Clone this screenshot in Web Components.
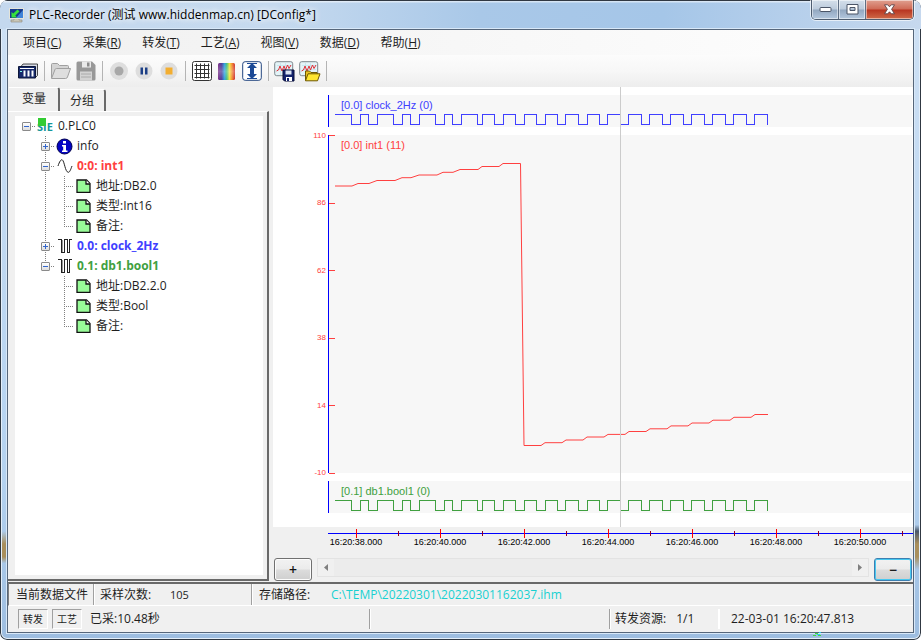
<!DOCTYPE html>
<html lang="zh-CN">
<head>
<meta charset="utf-8">
<title>PLC-Recorder</title>
<style>
  html, body { margin: 0; height: 100%; }
  body { font: 12px/16px "Open Sans", "Noto Sans CJK SC", sans-serif; color: #1e1e1e; background: #fff; overflow: hidden; }
</style>
</head>
<body>
<app-window>
  <title-bar slot="title">PLC-Recorder (测试 www.hiddenmap.cn) [DConfig*]</title-bar>
  <menu-bar></menu-bar>
  <tool-bar></tool-bar>
  <work-area>
    <side-panel slot="side"><variable-tree></variable-tree></side-panel>
    <trend-chart></trend-chart>
    <scroll-row></scroll-row>
  </work-area>
  <file-status></file-status>
  <run-status></run-status>
</app-window>

<script>
const define = (name, html, init) => customElements.define(name, class extends HTMLElement {
  connectedCallback() {
    if (this.shadowRoot) return;
    const root = this.attachShadow({ mode: 'open' });
    root.innerHTML = typeof html === 'function' ? html(this) : html;
    if (init) init(root, this);
  }
});

/* ---------- window frame ---------- */
define('app-window', `
<style>
  :host { display: flex; flex-direction: column; height: 100vh; box-sizing: border-box; padding: 0 7px 7px;
    border-radius: 8px 8px 7px 7px; position: relative; overflow: hidden;
    box-shadow: inset 0 0 0 1px #303842, inset 0 0 0 2px #e4effa;
    background:
      linear-gradient(#0000 82%, #49576a 83%, #a98f5c 85%, #a98f5c 87%, #0000 89%) right / 7px 100% no-repeat,
      linear-gradient(#0000 83%, #a98f5c 85%, #a98f5c 87%, #0000 88%) left / 7px 100% no-repeat,
      linear-gradient(#cfe1f4 0, #c3daf2 30%, #b4d2f0 75%, #9dbde0 100%); }
  .client { flex: 1; min-height: 0; display: flex; flex-direction: column; background: #f0f0f0;
    border: 1px solid #56667a; box-shadow: 0 0 0 1px #d8e8f8; }
  .mark { position: absolute; right: 99px; bottom: 3px; }
</style>
<slot name="title"></slot>
<div class="client"><slot></slot></div>
<svg class="mark" width="9" height="5" viewBox="0 0 9 5" shape-rendering="crispEdges"><path d="M0 3.5h3M2 1.5h3M5 3.5h3" stroke="#3ddc3d"/><path d="M4 2.5h3M6 .5h2" stroke="#22c8e8"/></svg>`);

define('title-bar', `
<style>
  :host { display: flex; align-items: center; height: 29px; flex: none; margin: 0 -7px; padding: 0 7px 0 9px; box-sizing: border-box; color: #000;
    background: linear-gradient(#303842 1px, #fff8 1px, #fff8 2px, #0000 3px),
      linear-gradient(90deg, #c4d8ee 0, #c6daef 30%, #a9c8e8 52%, #a5c6e8 72%, #c6d8ee 100%); border-radius: 8px 8px 0 0; }
  .name { flex: 1; margin-left: 5px; text-shadow: 0 0 6px #fff, 0 0 6px #fff; }
  .controls { display: flex; align-self: flex-start; border: 1px solid #4e5d70; border-top: 0; border-radius: 0 0 5px 5px; overflow: hidden; box-shadow: 0 0 0 1px #ffffffa0; }
  button { width: 27px; height: 19px; padding: 0; border: 0; border-right: 1px solid #5f6f84; display: grid; place-items: center;
    background: linear-gradient(#d4dfea, #bccbdc 48%, #92a7c0 52%, #b4c8de); box-shadow: inset 0 0 0 1px #ffffff80; }
  button.close { width: 47px; border-right: 0; background: linear-gradient(#e0a090, #cf6a56 48%, #b83420 52%, #cf6a48); }
</style>
<svg width="15" height="16" viewBox="0 0 15 16"><path d="M5 11h5v2h3v2H2v-2h3z" fill="#c9c7b8" stroke="#8a8878" stroke-width=".6"/><rect x=".5" y="1.5" width="14" height="10" fill="#173a8c" stroke="#e4e4da"/><path d="M7 11l7-8v8z" fill="#3f83d9"/><path d="M2.500 10.500V5l1.800 1.500L8.500 2.500l2 2-4.200 4L8 10.500z" fill="#35e03c"/></svg>
<span class="name"><slot></slot></span>
<div class="controls">
  <button aria-label="最小化"><svg width="13" height="7"><rect x="1" y="1.500" width="11" height="4" rx="1" fill="#fff" stroke="#4b5567"/></svg></button>
  <button aria-label="还原"><svg width="13" height="11"><path fill-rule="evenodd" d="M1 .5h11v9.500H1zM4 3.500h5v3H4z" fill="#fff" stroke="#4b5567"/></svg></button>
  <button class="close" aria-label="关闭"><svg width="13" height="11"><path d="M1.500.8h3.200l1.800 2 1.800-2h3.200L8.600 5.300l2.900 4.500H8.300l-1.800-2-1.800 2H1.500l2.900-4.500z" fill="#fff" stroke="#5b4044" stroke-width=".9"/></svg></button>
</div>`);

/* ---------- menu ---------- */
define('menu-bar', () => `
<style>
  :host { display: block; flex: none; background: linear-gradient(90deg, #f0f0f0, #fcfcfc 85%); }
  nav { display: flex; height: 25px; padding-left: 5px; }
  button { font: inherit; color: inherit; border: 0; background: none; padding: 1px 11px 0 10px; white-space: nowrap; }
</style>
<nav>${[['项目','C'],['采集','R'],['转发','T'],['工艺','A'],['视图','V'],['数据','D'],['帮助','H']]
  .map(([t, k]) => `<button>${t}(<u>${k}</u>)</button>`).join('')}</nav>`);

/* ---------- toolbar ---------- */
const trendBase = `<rect x=".7" y=".7" width="18" height="14" rx="2" fill="#e4f4f8" stroke="#7d878c"/><path d="M3 4.500h14M3 8.500h14M6.500 2v12M11.500 2v12" stroke="#b8dde8" stroke-width=".6"/><path d="M2.500 10l2-1 1.500-4 2 5 2-5 1.500 4 2-5 1.500 3.500 2-3.500" fill="none" stroke="#e03038"/>`;
const tools = [
  ['PLC', 20, 16, `<path d="M3 3.500L5 1h14.500v11.500L17 15z" fill="#d9dde6" stroke="#222" stroke-width=".8"/><path d="M.5 3.500h17v11.500H.5z" fill="#172a6c" stroke="#0c1638"/><path d="M2 5h14v1H2z" fill="#fff"/><path d="M2 8.500h2" stroke="#8fe"/><path d="M5.500 7.500h2v6h-2zM9.500 7.500h2v6h-2zM13.500 7.500h2v6h-2z" fill="#fff"/>`],
  '|',
  ['打开', 22, 20, `<path d="M1.500 17V3.500q0-1 1-1h5l2 2h8q1 0 1 1V8" fill="#d4d4d4" stroke="#a0a0a0"/><path d="M1.500 17.500L5 8.500q.4-1 1.500-1h14L17.500 16q-.5 1.500-2 1.500z" fill="#dedede" stroke="#a0a0a0"/>`],
  ['保存', 20, 20, `<path d="M.5 2q0-1.500 1.500-1.500h14l3.500 3.500V18q0 1.500-1.500 1.500H2Q.5 19.500.5 18z" fill="#989898"/><path d="M6 .5h9v6H6z" fill="#e9e9e9"/><path d="M11 1.500h2.500v4H11z" fill="#8a8a8a"/><path d="M4 10.500h12v9H4z" fill="#d3d3d3"/><path d="M5 13h10M5 16h10" stroke="#aaa"/>`],
  '|',
  ['录制', 18, 18, `<circle cx="9" cy="9" r="9" fill="#dedede"/><circle cx="9" cy="9" r="4.500" fill="#a8a8a8"/>`],
  ['暂停', 18, 18, `<circle cx="9" cy="9" r="8.500" fill="#dedede"/><path d="M5.500 5.500h2.500v7H5.500zM10 5.500h2.500v7H10z" fill="#1c3f86"/>`],
  ['停止', 18, 18, `<circle cx="9" cy="9" r="8.500" fill="#dedede"/><path d="M5.500 5.500h7v7h-7z" fill="#f3ae30"/>`],
  '|',
  ['网格', 20, 20, `<rect x=".5" y=".5" width="19" height="19" rx="2" fill="#fff" stroke="#333"/><path d="M2.500 4.500h15M2.500 8.500h15M2.500 12.500h15M2.500 16.500h15M4.500 2.500v15M8.500 2.500v15M12.500 2.500v15M16.500 2.500v15" stroke="#333"/>`],
  ['颜色', 17, 17, `<defs><linearGradient id="c"><stop offset="0" stop-color="#7a2a84"/><stop offset=".22" stop-color="#4a3f9c"/><stop offset=".38" stop-color="#2f9fe0"/><stop offset=".52" stop-color="#49c07a"/><stop offset=".68" stop-color="#f4e23a"/><stop offset=".85" stop-color="#ef7a30"/><stop offset="1" stop-color="#c8262c"/></linearGradient><linearGradient id="w" x2="0" y2="1"><stop offset="0" stop-color="#fff" stop-opacity="0"/><stop offset=".5" stop-color="#fff" stop-opacity=".25"/><stop offset="1" stop-color="#fff" stop-opacity="0"/></linearGradient></defs><rect width="17" height="17" rx="1.500" fill="url(#c)"/><rect width="17" height="17" rx="1.500" fill="url(#w)"/>`],
  ['自适应高度', 20, 20, `<rect x=".7" y=".7" width="18.600" height="18.600" rx="2.500" fill="#fff" stroke="#22457f"/><path d="M10 2l5 5h-3v6h3l-5 5-5-5h3V7H5z" fill="#1d4a96"/><path d="M5 2.500h10M5 17.500h10" stroke="#1d4a96"/>`],
  '|',
  ['保存趋势', 21, 21, trendBase + `<path d="M9 9h11v11H10.500L9 18.500z" fill="#12226c" stroke="#080f38"/><path d="M11.500 9.500h6v4h-6z" fill="#dbe4f2"/><path d="M12 16h6v4h-6z" fill="#fff"/><path d="M13 17h2v3h-2z" fill="#12226c"/>`],
  ['打开趋势', 22, 21, trendBase + `<path d="M6.500 19.500V10h4l1.500 1.500h6V13" fill="#e8c020" stroke="#6e5800"/><path d="M6.500 19.800l2.500-7h12l-2.500 7z" fill="#ffe62e" stroke="#6e5800"/>`],
  '|'
];
define('tool-bar', () => `
<style>
  :host { display: flex; align-items: center; height: 32px; flex: none; padding-left: 7px; background: linear-gradient(#fcfcfc, #f7f7f7 50%, #ededed); }
  button { width: 25px; height: 26px; border: 0; padding: 0; background: none; display: grid; place-items: center; }
  i { width: 8px; height: 20px; background: linear-gradient(#b4b4b4, #b4b4b4) center / 1px 100% no-repeat; }
</style>
${tools.map(t => t === '|' ? '<i></i>' : `<button aria-label="${t[0]}"><svg width="${t[1]}" height="${t[2]}" viewBox="0 0 ${t[1]} ${t[2]}">${t[3]}</svg></button>`).join('')}`);

/* ---------- work area ---------- */
define('work-area', `
<style>
  :host { flex: 1; min-height: 0; display: grid; grid-template-columns: 265px minmax(0, 1fr); }
  .main { display: flex; flex-direction: column; min-height: 0; }
</style>
<slot name="side"></slot>
<div class="main"><slot></slot></div>`);

define('side-panel', `
<style>
  :host { display: flex; flex-direction: column; min-height: 0; padding: 0 4px 1px 0; }
  .tabs { display: flex; align-items: flex-end; height: 24px; padding-left: 1px; }
  button { font: inherit; color: inherit; border: 0; background: none; height: 22px; padding: 0 10px; border-top: 1px solid #fff; border-right: 2px solid #696969; border-radius: 0 3px 0 0; }
  button[aria-selected=true] { height: 24px; padding: 0 12px 1px 13px; }
  .sheet { flex: 1; min-height: 0; display: flex; padding: 4px 4px 4px 7px; border: 1px solid #fff; border-width: 1px 2px 2px 0; border-right-color: #696969; border-bottom-color: #696969; }
  .view { flex: 1; background: #fff; overflow: hidden; }
</style>
<div class="tabs" role="tablist"><button role="tab" aria-selected="true">变量</button><button role="tab" aria-selected="false">分组</button></div>
<div class="sheet"><div class="view"><slot></slot></div></div>`);

const icons = {
  plc: `<svg width="18" height="16" viewBox="0 0 18 16"><text x="0" y="13" font-family="Open Sans" font-weight="700" font-size="11" fill="#16969a">SIE</text><path d="M1 0h8v8H1z" fill="#33cc33"/></svg>`,
  info: `<svg width="17" height="17" viewBox="0 0 17 17"><circle cx="8.500" cy="8.500" r="7.500" fill="#0404c4" stroke="#02024e"/><path d="M7 3h3v2.500H7zM6 7h4v5.500h1.500V14H6v-1.500h1.200V8.500H6z" fill="#fff"/></svg>`,
  wave: `<svg width="16" height="16" viewBox="0 0 16 16"><path d="M1 8C2.500 3.500 4 1.300 5.200 1.800C7.500 3 8 14 11.300 14.300C12.700 14.300 13.500 12 15 8" fill="none" stroke="#222"/></svg>`,
  pulse: `<svg width="14" height="16" viewBox="0 0 14 16" shape-rendering="crispEdges"><path d="M0 1.500h4M3.500 1v14M3 14.500h4M6.500 15V1M6 1.500h4M9.500 1v14M9 14.500h3M11.500 15V1M11 1.500h3" stroke="#222"/><path d="M4.500 2v12" stroke="#999"/></svg>`,
  note: `<svg width="15" height="14" viewBox="0 0 15 14"><path d="M1 1h9.500l3.500 3.500V13.300H1z" fill="#98fb98" stroke="#111" stroke-width="1.300"/><path d="M10 1v4h4" fill="#fff" stroke="#111" stroke-width="1.300"/></svg>`
};
define('tree-row', el => `
<style>
  :host { display: flex; height: 20px; align-items: center; white-space: nowrap; }
  b, i { flex: none; width: 19px; height: 20px; display: grid; place-items: center; font-style: normal; }
  b { --v: repeating-linear-gradient(#808080 0 1px, #0000 1px 2px); --h: repeating-linear-gradient(90deg, #808080 0 1px, #0000 1px 2px); background-repeat: no-repeat; }
  .i { background-image: var(--v); background-size: 1px 20px; background-position: 9px 0; }
  .t { background-image: var(--v), var(--h); background-size: 1px 20px, 10px 1px; background-position: 9px 0, 9px 10px; }
  .l { background-image: var(--v), var(--h); background-size: 1px 10px, 10px 1px; background-position: 9px 0, 9px 10px; }
  .r { background-image: var(--h); background-size: 10px 1px; background-position: 9px 10px; }
  button { width: 9px; height: 9px; padding: 0; box-sizing: border-box; border: 1px solid #8a8a8a; border-radius: 1px;
    background: linear-gradient(#36c, #36c) center / 5px 1px no-repeat, linear-gradient(#fff, #ddd); }
  button.plus { background: linear-gradient(#36c, #36c) center / 5px 1px no-repeat, linear-gradient(#36c, #36c) center / 1px 5px no-repeat, linear-gradient(#fff, #ddd); }
  span { padding-left: 3px; }
</style>
${[...el.getAttribute('guides')].map(c => {
  const k = { '.': '', '|': 'i', '+': 't+', '-': 't-', 'm': 'l-', 'T': 't', 'L': 'l', 'r': 'r-' }[c];
  return `<b class="${k[0] || ''}">${k[1] ? `<button class="${k[1] === '+' ? 'plus' : ''}" aria-label="${k[1] === '+' ? '展开' : '折叠'}"></button>` : ''}</b>`;
}).join('')}<i>${icons[el.getAttribute('icon')]}</i><span><slot></slot></span>`);

define('variable-tree', () => `
<style>
  :host { display: block; padding-left: 2px; }
  .red, .blue, .green { font-weight: 700; }
  .red { color: #ff4040; } .blue { color: #4040ff; } .green { color: #40a040; }
</style>
${[['r','plc','0.PLC0'],['.+','info','info'],['.-','wave','0:0: int1','red'],
   ['.|T','note','地址:DB2.0'],['.|T','note','类型:Int16'],['.|L','note','备注:'],
   ['.+','pulse','0.0: clock_2Hz','blue'],['.m','pulse','0.1: db1.bool1','green'],
   ['..T','note','地址:DB2.2.0'],['..T','note','类型:Bool'],['..L','note','备注:']]
  .map(([g, i, t, c]) => `<tree-row guides="${g}" icon="${i}" class="${c || ''}">${t}</tree-row>`).join('')}`);

/* ---------- chart ---------- */
const PLOT_X = 329, PLOT_W = 583;
const edges = [351,360,368,377,393,402,410,419,435,444,452,461,477,482,494,503,515,524,536,545,557,565,578,587,599,607,620,628,641,649,662,670,683,691,704,712,725,733,746,754,767];
const pulsePath = () => {
  let y = 19, d = `M${335 - PLOT_X} 19.500`;
  for (const x of edges) { y = y === 19 ? 29 : 19; d += `H${x - PLOT_X + .5}V${y + .5}`; }
  return d;
};
const ramp = [[335,186],[352,186],[358,183.5],[369,183.5],[377,180.5],[395,180.5],[402,177.700],[411,177.700],[419,175],[437,175],[443,172.300],[453,172.300],[460,169.500],[478,169.500],[482,166.500],[499,166.500],[503,163.500],[520.5,163.500],[524,445.500],[541,445.500],[545,442.700],[562,442.700],[566,440],[583,440],[587,437],[604,437],[608,434.400],[625,434.400],[629,431.500],[646,431.500],[650,428.800],[667,428.800],[671,425.900],[688,425.900],[692,423],[709,423],[713,420.200],[730,420.200],[734,417.300],[751,417.300],[755,414.500],[768,414.500]];
const laneStyle = `
  .plot { flex: 1; position: relative; border-left: 1px solid #00f; background: #f7f7f7; }
  svg { position: absolute; inset: 0; width: 100%; height: 100%; display: block; }
  .scale { width: 55px; flex: none; box-sizing: border-box; }
  .label { position: relative; display: block; padding-left: 12px; font: 11px/14px "Liberation Sans", sans-serif; color: var(--ink); padding-top: 3px; }`;

define('digital-lane', () => `
<style>:host { display: flex; height: 32px; flex: none; } ${laneStyle}</style>
<div class="scale"></div>
<div class="plot"><svg viewBox="0 0 ${PLOT_W} 32" preserveAspectRatio="none" shape-rendering="crispEdges"><path d="${pulsePath()}" fill="none" style="stroke:var(--ink)"/></svg><span class="label"><slot></slot></span></div>`);

define('analog-lane', () => `
<style>:host { display: flex; flex: 1; min-height: 0; } ${laneStyle}
  .ticks { position: absolute; left: 0; top: 0; bottom: -1px; display: flex; flex-direction: column; justify-content: space-between; }
  .ticks i { width: 6px; height: 1px; background: var(--ink); }
  .scale { display: flex; flex-direction: column; justify-content: space-between; align-items: flex-end; padding-right: 2px; font: 8px/1px "Liberation Sans", sans-serif; color: var(--ink); }
</style>
<div class="scale">${[110, 86, 62, 38, 14, -10].map(v => `<span>${v}</span>`).join('')}</div>
<div class="plot"><svg viewBox="0 0 ${PLOT_W} 338" preserveAspectRatio="none"><path d="M${ramp.map(([x, y]) => `${x - PLOT_X} ${y - 135}`).join('L')}" fill="none" style="stroke:var(--ink)"/></svg>
<div class="ticks">${'<i></i>'.repeat(6)}</div><span class="label"><slot></slot></span></div>`);

define('time-axis', () => `
<style>
  :host { display: block; height: 29px; flex: none; }
  svg { display: block; width: 100%; height: 100%; font: 9px "Liberation Sans", sans-serif; }
</style>
<svg><g shape-rendering="crispEdges"><rect x="55" y="6" width="100%" height="1" fill="#00f"/>
${[0,1,2,3,4,5,6].map(i => `<rect x="${83 + i * 84}" y="2" width="1" height="9" fill="#f00"/><rect x="${125 + i * 84}" y="4" width="1" height="5" fill="#900020"/>`).join('')}</g>
${[0,1,2,3,4,5,6].map(i => `<text x="${83 + i * 84}" y="18" text-anchor="middle" fill="#000">16:20:${38 + 2 * i}.000</text>`).join('')}</svg>`);

define('trend-chart', `
<style>
  :host { flex: 1; min-height: 0; display: flex; flex-direction: column; }
  .lanes { flex: 1; min-height: 0; display: flex; flex-direction: column; gap: 8px; padding: 8px 1px 14px 0; background: #fff; position: relative; }
  .cursor { position: absolute; left: 347px; top: 0; bottom: 0; width: 1px; background: #ccc; }
  .blue { --ink: #4040ff; } .red { --ink: #ff4040; } .green { --ink: #40a040; }
</style>
<div class="lanes">
  <digital-lane class="blue">[0.0] clock_2Hz (0)</digital-lane>
  <analog-lane class="red">[0.0] int1 (11)</analog-lane>
  <digital-lane class="green">[0.1] db1.bool1 (0)</digital-lane>
  <div class="cursor"></div>
</div>
<time-axis></time-axis>`);

define('scroll-row', `
<style>
  :host { display: flex; height: 26px; flex: none; padding: 2px 1px 1px; box-sizing: border-box; gap: 5px; }
  button { font: 600 14px/16px "Open Sans", sans-serif; color: #111; padding: 0; }
  .zoom { width: 38px; border: 1px solid #707070; border-radius: 3px; background: linear-gradient(#f2f2f2, #ebebeb 48%, #dcdcdc 52%, #cfcfcf); box-shadow: inset 0 0 0 1px #fcfcfc; }
  .zoom.focus { border-color: #3c7fb1; box-shadow: inset 0 0 0 1px #48c8f0; }
  .bar { flex: 1; display: flex; justify-content: space-between; height: 19px; box-sizing: border-box; border: 1px solid #e3e3e3; background: #ececec; }
  .bar button { border: 0; background: #f0f0f0; width: 16px; display: grid; place-items: center; }
</style>
<button class="zoom" aria-label="放大">+</button>
<div class="bar"><button aria-label="向左滚动"><svg width="4" height="7"><path d="M4 0v7L0 3.500z" fill="#808080"/></svg></button><button aria-label="向右滚动"><svg width="4" height="7"><path d="M0 0v7l4-3.500z" fill="#808080"/></svg></button></div>
<button class="zoom focus" aria-label="缩小">−</button>`);

/* ---------- status ---------- */
define('file-status', `
<style>
  :host { display: flex; align-items: stretch; height: 24px; flex: none; box-sizing: border-box; padding-left: 7px; border-top: 2px solid #696969; border-left: 1px solid #808080; border-bottom: 1px solid #fff; line-height: 22px; white-space: nowrap; }
  span { box-sizing: border-box; }
  .sep { border-left: 1px solid #a0a0a0; box-shadow: inset 1px 0 #fff; padding-left: 6px; }
  .file { width: 77px; } .count { width: 77px; } .num { width: 81px; font-size: 11px; } .path { width: 80px; padding-left: 7px; }
  a { color: #18d0d0; text-decoration: none; }
</style>
<span class="file">当前数据文件</span><span class="sep count">采样次数:</span><span class="num">105</span><span class="sep path">存储路径:</span><a href="#">C:\\TEMP\\20220301\\20220301162037.ihm</a>`);

define('run-status', `
<style>
  :host { display: flex; align-items: center; height: 26px; flex: none; padding-left: 10px; box-sizing: border-box; white-space: nowrap; }
  button { font: 10px/16px "Noto Sans CJK SC", sans-serif; color: inherit; width: 30px; height: 20px; padding: 0; margin-right: 4px; background: none; border: 1px solid; border-color: #a0a0a0 #fff #fff #a0a0a0; }
  .run { flex: 280; padding-left: 4px; }
  .sep { border-left: 1px solid #a0a0a0; box-shadow: inset 1px 0 #fff; height: 20px; line-height: 20px; box-sizing: border-box; padding-left: 5px; }
  .gap { flex: 235; } .res { width: 109px; } .sep.time { width: 195px; border-color: #fff; padding-left: 12px; }
  .val { margin-left: 10px; }
</style>
<button>转发</button><button>工艺</button><span class="run">已采:10.48秒</span><span class="sep gap"></span><span class="sep res">转发资源:<span class="val">1/1</span></span><span class="sep time">22-03-01 16:20:47.813</span>`);
</script>
</body>
</html>
